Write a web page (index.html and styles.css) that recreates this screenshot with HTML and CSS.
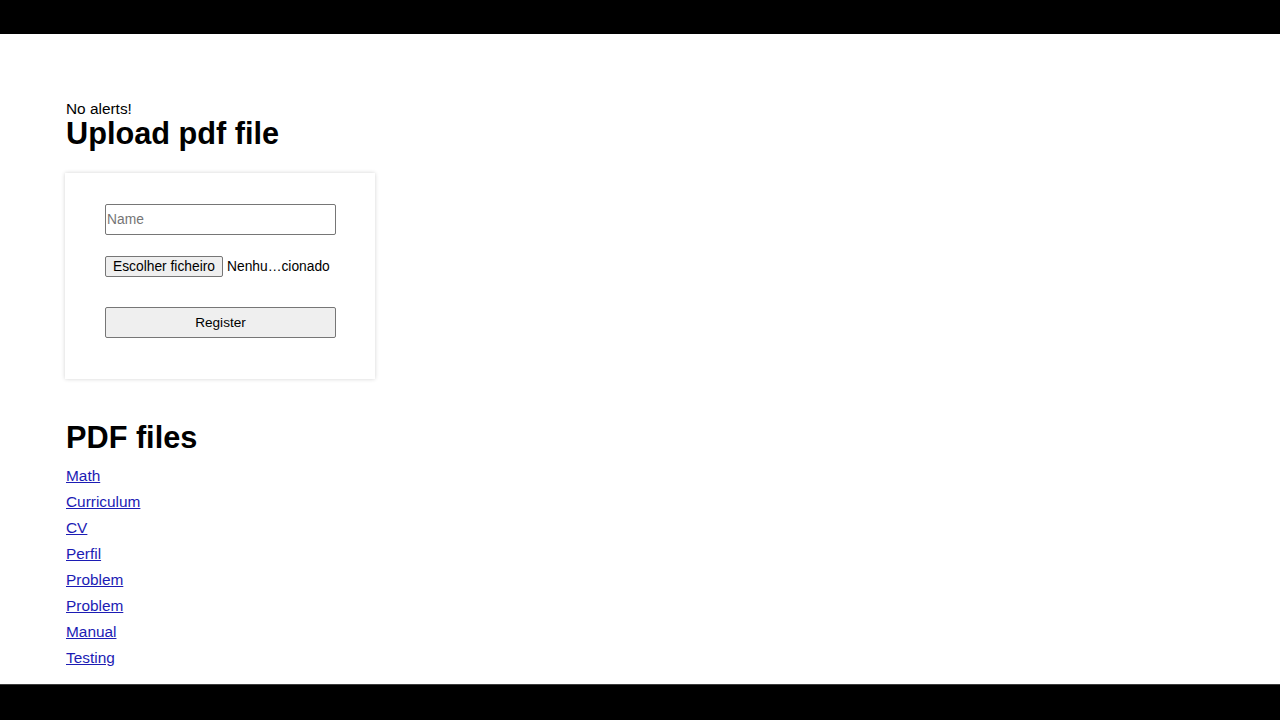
FILE: index.html
```html
<!DOCTYPE html>
<html lang="pt">
<head>
<meta charset="utf-8">
<title>Upload pdf file</title>
<link rel="stylesheet" href="styles.css">
</head>
<body>
<div class="bar-top"></div>
<main class="page">
  <div class="alerts">No alerts!</div>
  <h1 class="title">Upload pdf file</h1>
  <form class="card">
    <input class="field" type="text" placeholder="Name">
    <div class="file-row">
      <span class="file-btn">Escolher ficheiro</span>
      <span class="file-name">Nenhu…cionado</span>
    </div>
    <button class="submit" type="button">Register</button>
  </form>
  <h2 class="title list-title">PDF files</h2>
  <ul class="files">
    <li><a href="#">Math</a></li>
    <li><a href="#">Curriculum</a></li>
    <li><a href="#">CV</a></li>
    <li><a href="#">Perfil</a></li>
    <li><a href="#">Problem</a></li>
    <li><a href="#">Problem</a></li>
    <li><a href="#">Manual</a></li>
    <li><a href="#">Testing</a></li>
  </ul>
</main>
<div class="bar-bottom"></div>
</body>
</html>
```
FILE: styles.css
```css
html, body {
  margin: 0;
  padding: 0;
  background: #000;
  font-family: "Liberation Sans", Arial, sans-serif;
  color: #000;
}

.bar-top {
  height: 34px;
  background: #000;
}

.page {
  height: 650px;
  box-sizing: border-box;
  background: #fff;
  padding: 67px 0 0 66px;
  overflow: hidden;
}

.alerts {
  font-size: 15.4px;
  line-height: 16px;
}

.title {
  margin: 3px 0 0 0;
  font-size: 30.7px;
  line-height: 28px;
  font-weight: bold;
}

.card {
  width: 310px;
  box-sizing: border-box;
  margin: 25px 0 0 -1px;
  padding: 31px 39px 41px 40px;
  background: #fff;
  box-shadow: 0 0 4px rgba(0, 0, 0, 0.18);
  display: flex;
  flex-direction: column;
  align-items: flex-start;
}

.field {
  width: 231px;
  height: 31px;
  box-sizing: border-box;
  margin: 0;
  padding: 0 1px;
  border: 1px solid #767676;
  border-radius: 2px;
  font-family: "Liberation Sans", Arial, sans-serif;
  font-size: 13.8px;
  color: #000;
  background: #fff;
}

.field::placeholder {
  color: #757575;
}

.file-row {
  margin-top: 21px;
  display: flex;
  align-items: center;
  gap: 4px;
  font-size: 13.8px;
}

.file-btn {
  height: 21px;
  box-sizing: border-box;
  width: 118px;
  display: flex;
  align-items: center;
  justify-content: center;
  border: 1px solid #767676;
  border-radius: 2px;
  background: #efefef;
  color: #000;
}

.file-name {
  color: #000;
}

.submit {
  margin-top: 30px;
  width: 231px;
  height: 31px;
  box-sizing: border-box;
  border: 1px solid #767676;
  border-radius: 2px;
  background: #efefef;
  font-family: "Liberation Sans", Arial, sans-serif;
  font-size: 13.6px;
  color: #000;
  padding: 0;
}

.list-title {
  margin-top: 45px;
}

.files {
  list-style: none;
  margin: 11px 0 0 0;
  padding: 0;
  font-size: 15.4px;
  line-height: 26px;
}

.files a {
  color: #1c1cb4;
  text-decoration: underline;
}

.bar-bottom {
  height: 36px;
  box-sizing: border-box;
  background: #000;
  border-top: 1px solid #3c3c3c;
}
```
